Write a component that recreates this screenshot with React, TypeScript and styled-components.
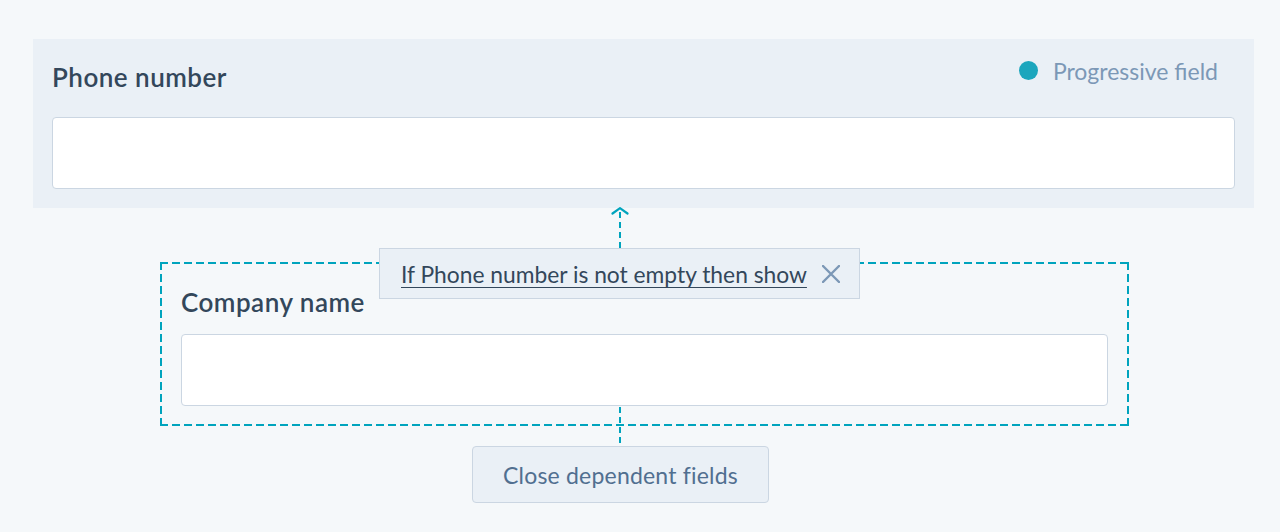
import React, { FC } from 'react';
import styled, { createGlobalStyle } from 'styled-components';

const GlobalStyle = createGlobalStyle`
  html, body {
    margin: 0;
    padding: 0;
    background: #f5f8fa;
    font-family: Lato, 'Open Sans', sans-serif;
  }
`;

const TEAL = '#00a4bd';

const Page = styled.div`
  height: 532px;
  padding: 39px 0 0 33px;
  box-sizing: border-box;
  overflow: hidden;
`;

const FieldPanel = styled.section`
  width: 1221px;
  height: 169px;
  box-sizing: border-box;
  padding: 0 19px;
  background: #eaf0f6;
`;

const FieldHeader = styled.div`
  display: flex;
  justify-content: space-between;
  align-items: flex-start;
  height: 78px;
`;

const FieldLabel = styled.label<{ $top: number }>`
  display: block;
  padding-top: ${(p) => p.$top}px;
  font-size: 26px;
  font-weight: 600;
  letter-spacing: 0.5px;
  color: #33475b;
  line-height: 1;
`;

const Progressive = styled.div`
  display: flex;
  align-items: center;
  gap: 15px;
  padding: 21px 17px 0 0;
  font-size: 23px;
  color: #7c98b6;
  line-height: 23px;
`;

const Dot = styled.span`
  width: 19px;
  height: 19px;
  margin-top: -3px;
  border-radius: 50%;
  background: #1ca6bd;
`;

const TextInput = styled.div`
  height: 72px;
  box-sizing: border-box;
  border: 1.5px solid #cbd6e2;
  border-radius: 4px;
  background: #fff;
`;

const Stem = styled.div<{ $height: number }>`
  position: relative;
  width: 2px;
  height: ${(p) => p.$height}px;
  margin-left: 586px;
  background-image: linear-gradient(to bottom, ${TEAL} 6px, transparent 6px);
  background-size: 2px 10px;
  background-position: 0 4px;
  background-repeat: repeat-y;
`;

const Arrow = styled.svg`
  position: absolute;
  top: -1px;
  left: -8px;
`;

const DependentBox = styled.div`
  position: relative;
  width: 969px;
  height: 164px;
  box-sizing: border-box;
  margin-left: 127px;
  padding: 0 21px;
  background-image:
    linear-gradient(to right, ${TEAL} 8px, transparent 8px),
    linear-gradient(to right, ${TEAL} 8px, transparent 8px),
    linear-gradient(to bottom, ${TEAL} 8px, transparent 8px),
    linear-gradient(to bottom, ${TEAL} 8px, transparent 8px);
  background-size: 12px 2px, 12px 2px, 2px 12px, 2px 12px;
  background-position: 0 0, 0 100%, 0 0, 100% 0;
  background-repeat: repeat-x, repeat-x, repeat-y, repeat-y;
`;

const DependentHeader = styled.div`
  height: 72px;
`;

const ConditionBadge = styled.div`
  position: absolute;
  z-index: 1;
  top: -14px;
  left: 219px;
  width: 481px;
  height: 51px;
  box-sizing: border-box;
  display: flex;
  align-items: center;
  justify-content: space-between;
  padding: 0 19px 0 21px;
  background: #eaf0f6;
  border: 1.5px solid #cbd6e2;
`;

const ConditionLink = styled.a`
  font-size: 22.8px;
  color: #33475b;
  text-decoration: underline;
  text-underline-offset: 4px;
  text-decoration-thickness: 1px;
`;

const LowerStem = styled(Stem)`
  z-index: 1;
  margin-top: -20px;
  background-position: 0 1px;
`;

const Button = styled.button`
  margin-left: 439px;
  width: 297px;
  height: 57px;
  border: 1.5px solid #cbd6e2;
  border-radius: 4px;
  background: #eaf0f6;
  color: #516f90;
  font-family: inherit;
  font-size: 23px;
  letter-spacing: 0.2px;
`;

const CloseIcon: FC = () => (
  <svg width="18" height="18" viewBox="0 0 18 18">
    <path d="M1 1 L17 17 M17 1 L1 17" stroke="#7c98b6" strokeWidth="2.4" strokeLinecap="round" />
  </svg>
);

export default function App() {
  return (
    <Page>
      <GlobalStyle />
      <FieldPanel>
        <FieldHeader>
          <FieldLabel $top={25}>Phone number</FieldLabel>
          <Progressive>
            <Dot />
            Progressive field
          </Progressive>
        </FieldHeader>
        <TextInput />
      </FieldPanel>

      <Stem $height={54}>
        <Arrow width="18" height="8" viewBox="0 0 18 8">
          <path d="M1.5 6.5 L9 1.2 L16.5 6.5" fill="none" stroke={TEAL} strokeWidth="2.2" strokeLinecap="round" />
        </Arrow>
      </Stem>

      <DependentBox>
        <ConditionBadge>
          <ConditionLink>If Phone number is not empty then show</ConditionLink>
          <CloseIcon />
        </ConditionBadge>
        <DependentHeader>
          <FieldLabel $top={27}>Company name</FieldLabel>
        </DependentHeader>
        <TextInput />
      </DependentBox>

      <LowerStem $height={40} />
      <Button>Close dependent fields</Button>
    </Page>
  );
}
